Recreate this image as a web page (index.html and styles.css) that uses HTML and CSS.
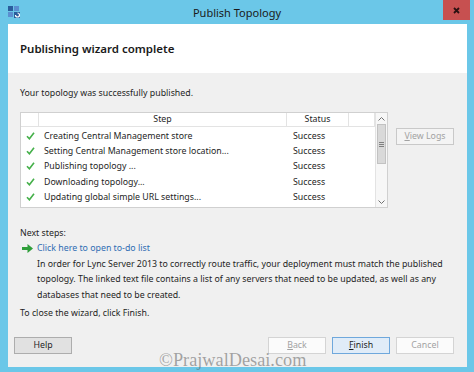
FILE: index.html
```html
<!DOCTYPE html>
<html>
<head>
  <title>Publish Topology</title>
  <link rel="stylesheet" href="styles.css">
</head>
<body>
  <div class="window">

    <!-- Title bar -->
    <div class="titlebar">
      <div class="title-icon">
        <svg width="13" height="13" viewBox="0 0 13 13">
          <rect x="0" y="0" width="5" height="5" fill="#2a5d9c"/>
          <rect x="6" y="0" width="5" height="5" fill="#5b8fd0"/>
          <rect x="0" y="6" width="5" height="5" fill="#5b8fd0"/>
          <rect x="6" y="6" width="6" height="6" fill="#2a5d9c"/>
          <path d="M7.5 9 a2 2 0 1 0 2 -2" stroke="#ffffff" stroke-width="1.2" fill="none"/>
        </svg>
      </div>
      <div class="title">Publish Topology</div>
      <div class="title-right">
        <div class="close-btn">
          <svg width="7" height="7" viewBox="0 0 7 7">
            <path d="M1 1L6 6M6 1L1 6" stroke="#2b1010" stroke-width="1.8"/>
          </svg>
        </div>
      </div>
    </div>

    <div class="frame">
      <div class="header">
        <h1>Publishing wizard complete</h1>
      </div>

      <div class="body">
        <div class="content">
          <p class="intro">Your topology was successfully published.</p>

          <div class="results">
            <div class="list">
              <div class="grid">
                <div class="row head">
                  <span class="c-check"></span>
                  <span class="c-step">Step</span>
                  <span class="c-status">Status</span>
                  <span class="c-pad"></span>
                </div>
                <div class="rows"></div>
              </div>
              <div class="scrollbar">
                <div class="sb-arrow">
                  <svg width="7" height="4" viewBox="0 0 7 4"><path d="M0.5 3.5L3.5 0.5L6.5 3.5" stroke="#707070" fill="none"/></svg>
                </div>
                <div class="sb-thumb">
                  <span></span><span></span><span></span>
                </div>
                <div class="sb-track"></div>
                <div class="sb-arrow">
                  <svg width="7" height="4" viewBox="0 0 7 4"><path d="M0.5 0.5L3.5 3.5L6.5 0.5" stroke="#707070" fill="none"/></svg>
                </div>
              </div>
            </div>
            <button class="btn view-logs" disabled><u>V</u>iew Logs</button>
          </div>

          <p class="next">Next steps:</p>
          <div class="todo">
            <svg width="11" height="9" viewBox="0 0 11 9">
              <path d="M0 3h5.5V0l5.5 4.5-5.5 4.5V6H0z" fill="#2f9e3a"/>
            </svg>
            <a>Click here to open to-do list</a>
          </div>
          <p class="note">In order for Lync Server 2013 to correctly route traffic, your deployment must match the published<br>topology. The linked text file contains a list of any servers that need to be updated, as well as any<br>databases that need to be created.</p>
          <p class="close-note">To close the wizard, click Finish.</p>
        </div>

        <div class="buttons">
          <button class="btn help">Help</button>
          <div class="right-buttons">
            <button class="btn" disabled><u>B</u>ack</button>
            <button class="btn finish"><u>F</u>inish</button>
            <button class="btn" disabled>Cancel</button>
          </div>
        </div>
      </div>
    </div>

    <div class="watermark">©PrajwalDesai.com</div>
  </div>

  <script>
    var steps = [
      'Creating Central Management store',
      'Setting Central Management store location...',
      'Publishing topology ...',
      'Downloading topology...',
      'Updating global simple URL settings...',
      ''
    ];

    var rows = document.querySelector('.rows');
    steps.forEach(function (step) {
      var row = document.createElement('div');
      row.className = 'row';
      row.innerHTML =
        '<span class="c-check"><svg width="9" height="8" viewBox="0 0 9 8">' +
        '<path d="M1 4.2L3.4 6.8L8 0.8" stroke="#45b04a" stroke-width="1.6" fill="none"/></svg></span>' +
        '<span class="c-step">' + step + '</span>' +
        '<span class="c-status">' + (step ? 'Success' : '') + '</span>' +
        '<span class="c-pad"></span>';
      rows.appendChild(row);
    });
  </script>
</body>
</html>
```

FILE: styles.css
```css
body {
  margin: 0;
  font-family: "Noto Sans", sans-serif;
  font-size: 8.8px;
  color: #1e1e1e;
}

.window {
  position: relative;
  width: 474px;
  height: 372px;
  background-color: #6bc7e8;
  display: flex;
  flex-direction: column;
  overflow: hidden;
}

/* Title bar */
.titlebar {
  height: 24px;
  display: grid;
  grid-template-columns: 1fr auto 1fr;
  align-items: center;
}

.title-icon {
  padding-left: 8px;
  display: flex;
}

.title {
  font-size: 11px;
  color: #1a1a1a;
}

.title-right {
  display: flex;
  justify-content: flex-end;
  align-self: start;
}

.close-btn {
  width: 27px;
  height: 20px;
  margin-right: 4px;
  background-color: #c75050;
  display: flex;
  align-items: center;
  justify-content: center;
}

/* Frame */
.frame {
  flex: 1;
  display: flex;
  flex-direction: column;
  padding: 0 7px 5px 8px;
}

.header {
  height: 49px;
  background-color: #ffffff;
}

h1 {
  margin: 0;
  padding-left: 12px;
  line-height: 49px;
  font-size: 11.5px;
  font-weight: 600;
  color: #1a1a1a;
}

.body {
  flex: 1;
  background-color: #f0f0f0;
  display: flex;
  flex-direction: column;
}

.content {
  padding: 12px 0 0 12px;
}

p {
  margin: 0;
}

.intro {
  line-height: 16px;
}

/* Results list */
.results {
  display: flex;
  align-items: flex-start;
  margin-top: 11px;
}

.list {
  width: 366px;
  height: 94px;
  border: 1px solid #d0d0d0;
  background-color: #ffffff;
  display: flex;
  overflow: hidden;
}

.grid {
  flex: 1;
}

.rows {
  padding-top: 1px;
}

.row {
  display: flex;
  height: 15.4px;
  align-items: center;
  white-space: nowrap;
}

.row.head {
  height: 13px;
  border-bottom: 1px solid #e3e3e3;
}

.row.head span {
  height: 13px;
  line-height: 13px;
  border-right: 1px solid #e3e3e3;
  text-align: center;
}

.c-check {
  width: 18px;
  display: flex;
  justify-content: center;
  box-sizing: border-box;
}

.c-step {
  width: 248px;
  padding-left: 5px;
  box-sizing: border-box;
}

.c-status {
  width: 62px;
  padding-left: 6px;
  box-sizing: border-box;
}

.c-pad {
  width: 25px;
}

.row.head .c-step,
.row.head .c-status {
  padding-left: 0;
}

.scrollbar {
  width: 13px;
  border-left: 1px solid #e3e3e3;
  background-color: #f7f7f7;
  display: flex;
  flex-direction: column;
}

.sb-arrow {
  height: 11px;
  display: flex;
  align-items: center;
  justify-content: center;
}

.sb-thumb {
  height: 38px;
  margin: 0 1px;
  background-color: #d9d9d9;
  border: 1px solid #c2c2c2;
  display: flex;
  flex-direction: column;
  align-items: center;
  justify-content: center;
  gap: 1px;
}

.sb-thumb span {
  width: 5px;
  height: 1px;
  background-color: #808080;
}

.sb-track {
  flex: 1;
}

/* Buttons */
.btn {
  width: 58px;
  height: 17px;
  padding: 0;
  font-family: "Noto Sans", sans-serif;
  font-size: 8.8px;
  line-height: 11px;
  color: #1e1e1e;
  background-color: #e1e1e1;
  border: 1px solid #adadad;
  border-radius: 0;
}

.btn:disabled {
  color: #a2a2a2;
  background-color: #fbfbfb;
  border-color: #d4d4d4;
}

.view-logs {
  margin-left: 8px;
  margin-top: 16px;
}

.view-logs:disabled {
  background-color: #f4f4f4;
  border-color: #c9c9c9;
}

.finish {
  background-color: #e0ecf8;
  border-color: #6fa8dc;
}

/* Next steps */
.next {
  margin-top: 17.5px;
  line-height: 15.5px;
}

.todo {
  display: flex;
  align-items: center;
  gap: 4px;
  padding-left: 2px;
  line-height: 15.5px;
}

.todo a {
  color: #2f6db3;
}

.note {
  padding-left: 17px;
  line-height: 15.5px;
  white-space: nowrap;
}

.close-note {
  margin-top: 2.5px;
  line-height: 15.5px;
}

.buttons {
  margin-top: auto;
  display: flex;
  justify-content: space-between;
  padding: 0 13px 13px 6px;
}

.right-buttons {
  display: flex;
  gap: 6px;
}

.watermark {
  position: absolute;
  left: 159px;
  top: 354px;
  font-family: "Liberation Serif", serif;
  font-size: 18.3px;
  line-height: 12px;
  color: rgba(95, 95, 95, 0.55);
  white-space: nowrap;
}
```
